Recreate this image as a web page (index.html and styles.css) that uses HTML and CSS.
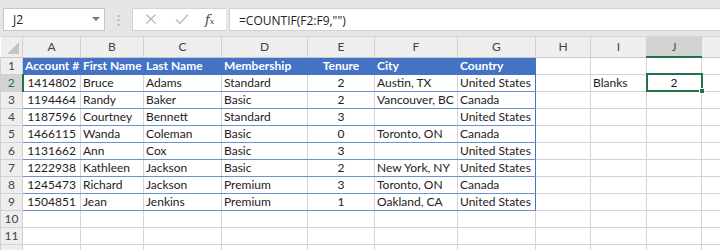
FILE: index.html
```html
<!DOCTYPE html>
<html lang="en">
<head>
    <meta charset="UTF-8">
    <meta name="viewport" content="width=device-width, initial-scale=1.0">
    <title>COUNTIF Blanks</title>
    <link rel="stylesheet" href="styles.css">
</head>
<body>
    <div class="formula-bar">
        <div class="name-box">
            <span>J2</span>
            <span class="arrow"></span>
        </div>
        <div class="grip">&#8942;</div>
        <div class="fx-box">
            <svg class="icon" width="12" height="12" viewBox="0 0 12 12"><path d="M1.5 1.5 L10.5 10.5 M10.5 1.5 L1.5 10.5" stroke="#b4b4b4" stroke-width="1.2" fill="none"/></svg>
            <svg class="icon" width="14" height="12" viewBox="0 0 14 12"><path d="M1 6.5 L5 10.5 L13 1.5" stroke="#b4b4b4" stroke-width="1.2" fill="none"/></svg>
            <span class="fx">f<sub>x</sub></span>
        </div>
        <div class="formula">=COUNTIF(F2:F9,"")</div>
    </div>

    <table class="sheet">
        <colgroup>
            <col style="width:22px">
            <col style="width:58px">
            <col style="width:63px">
            <col style="width:78px">
            <col style="width:86px">
            <col style="width:67px">
            <col style="width:83px">
            <col style="width:78px">
            <col style="width:55px">
            <col style="width:56px">
            <col style="width:55px">
            <col style="width:19px">
        </colgroup>
        <thead>
            <tr class="col-heads">
                <th class="corner"><span class="tri"></span></th>
                <th>A</th><th>B</th><th>C</th><th>D</th><th>E</th><th>F</th><th>G</th><th>H</th><th>I</th><th class="active">J</th><th></th>
            </tr>
        </thead>
        <tbody>
            <tr>
                <td class="rh">1</td>
                <td class="th first">Account #</td><td class="th">First Name</td><td class="th">Last Name</td><td class="th">Membership</td><td class="th c">Tenure</td><td class="th">City</td><td class="th last">Country</td>
                <td></td><td></td><td></td><td></td>
            </tr>
            <tr>
                <td class="rh active">2</td>
                <td class="tb first c">1414802</td><td class="tb">Bruce</td><td class="tb">Adams</td><td class="tb">Standard</td><td class="tb c">2</td><td class="tb">Austin, TX</td><td class="tb last">United States</td>
                <td></td><td>Blanks</td><td class="sel c">2<span class="handle"></span></td><td></td>
            </tr>
            <tr>
                <td class="rh">3</td>
                <td class="tb first c">1194464</td><td class="tb">Randy</td><td class="tb">Baker</td><td class="tb">Basic</td><td class="tb c">2</td><td class="tb">Vancouver, BC</td><td class="tb last">Canada</td>
                <td></td><td></td><td></td><td></td>
            </tr>
            <tr>
                <td class="rh">4</td>
                <td class="tb first c">1187596</td><td class="tb">Courtney</td><td class="tb">Bennett</td><td class="tb">Standard</td><td class="tb c">3</td><td class="tb"></td><td class="tb last">United States</td>
                <td></td><td></td><td></td><td></td>
            </tr>
            <tr>
                <td class="rh">5</td>
                <td class="tb first c">1466115</td><td class="tb">Wanda</td><td class="tb">Coleman</td><td class="tb">Basic</td><td class="tb c">0</td><td class="tb">Toronto, ON</td><td class="tb last">Canada</td>
                <td></td><td></td><td></td><td></td>
            </tr>
            <tr>
                <td class="rh">6</td>
                <td class="tb first c">1131662</td><td class="tb">Ann</td><td class="tb">Cox</td><td class="tb">Basic</td><td class="tb c">3</td><td class="tb"></td><td class="tb last">United States</td>
                <td></td><td></td><td></td><td></td>
            </tr>
            <tr>
                <td class="rh">7</td>
                <td class="tb first c">1222938</td><td class="tb">Kathleen</td><td class="tb">Jackson</td><td class="tb">Basic</td><td class="tb c">2</td><td class="tb">New York, NY</td><td class="tb last">United States</td>
                <td></td><td></td><td></td><td></td>
            </tr>
            <tr>
                <td class="rh">8</td>
                <td class="tb first c">1245473</td><td class="tb">Richard</td><td class="tb">Jackson</td><td class="tb">Premium</td><td class="tb c">3</td><td class="tb">Toronto, ON</td><td class="tb last">Canada</td>
                <td></td><td></td><td></td><td></td>
            </tr>
            <tr>
                <td class="rh">9</td>
                <td class="tb first c">1504851</td><td class="tb">Jean</td><td class="tb">Jenkins</td><td class="tb">Premium</td><td class="tb c">1</td><td class="tb">Oakland, CA</td><td class="tb last">United States</td>
                <td></td><td></td><td></td><td></td>
            </tr>
            <tr>
                <td class="rh">10</td>
                <td></td><td></td><td></td><td></td><td></td><td></td><td></td><td></td><td></td><td></td><td></td>
            </tr>
            <tr>
                <td class="rh">11</td>
                <td></td><td></td><td></td><td></td><td></td><td></td><td></td><td></td><td></td><td></td><td></td>
            </tr>
            <tr>
                <td class="rh"></td>
                <td></td><td></td><td></td><td></td><td></td><td></td><td></td><td></td><td></td><td></td><td></td>
            </tr>
        </tbody>
    </table>
</body>
</html>
```

FILE: styles.css
```css
* {
    box-sizing: border-box;
}
body {
    margin: 0;
    width: 720px;
    height: 250px;
    overflow: hidden;
    background-color: #ffffff;
    font-family: Lato, "Liberation Sans", sans-serif;
    color: #222;
}
.formula-bar {
    display: flex;
    align-items: center;
    height: 37px;
    padding: 8px 0 6px 3px;
    background-color: #e6e6e6;
    border-bottom: 1px solid #d6d6d6;
}
.name-box {
    display: flex;
    align-items: center;
    justify-content: space-between;
    width: 102px;
    height: 23px;
    padding: 0 4px 0 9px;
    background-color: #fff;
    border: 1px solid #c6c6c6;
    font-family: "Open Sans", sans-serif;
    font-size: 12px;
}
.arrow {
    width: 0;
    height: 0;
    border-left: 4px solid transparent;
    border-right: 4px solid transparent;
    border-top: 4px solid #777;
}
.grip {
    width: 27px;
    text-align: center;
    color: #a8a8a8;
    font-size: 13px;
}
.fx-box {
    display: flex;
    align-items: center;
    width: 94px;
    height: 23px;
    padding-left: 12px;
    gap: 18px;
    background-color: #fff;
    border: 1px solid #d2d2d2;
    border-right: none;
}
.icon {
    display: block;
}
.fx {
    font-family: "DejaVu Serif", serif;
    font-style: italic;
    font-size: 13px;
    color: #444;
    margin-left: -2px;
}
.fx sub {
    font-size: 8px;
    vertical-align: baseline;
}
.formula {
    flex: 1;
    height: 23px;
    margin-left: 3px;
    padding: 3px 0 0 9px;
    background-color: #fff;
    border: 1px solid #d2d2d2;
    border-right: none;
    font-family: "Open Sans", sans-serif;
    font-size: 12px;
}
.sheet {
    table-layout: fixed;
    border-collapse: collapse;
    width: 719px;
    font-size: 12px;
}
.sheet td {
    height: 17px;
    padding: 0 2px;
    border: 1px solid #d4d4d4;
    white-space: nowrap;
    overflow: hidden;
    line-height: 15px;
}
.col-heads th {
    height: 20px;
    padding: 0;
    font-weight: normal;
    font-size: 12px;
    color: #444;
    background-color: #eeeeee;
    border-left: 1px solid #d0d0d0;
    border-bottom: 1px solid #c8c8c8;
}
.col-heads th.corner {
    position: relative;
    border-left: none;
}
.tri {
    position: absolute;
    right: 3px;
    bottom: 3px;
    width: 0;
    height: 0;
    border-left: 12px solid transparent;
    border-bottom: 12px solid #c4c4c4;
}
.col-heads th.active {
    background-color: #d3d3d3;
    border-bottom: 2px solid #217346;
    color: #217346;
}
.sheet td.rh {
    padding: 0;
    text-align: center;
    color: #444;
    background-color: #eeeeee;
    border-color: #d0d0d0;
}
.sheet td.rh.active {
    background-color: #d3d3d3;
    color: #217346;
    border-right: 2px solid #217346;
}
.sheet td.th {
    background-color: #4472c4;
    color: #fff;
    font-weight: bold;
    border-color: #4472c4;
}
.sheet td.tb {
    border-top: 1px solid #6f8fcf;
    border-bottom: 1px solid #6f8fcf;
}
.sheet td.first {
    border-left: 1px solid #4472c4;
}
.sheet td.last {
    border-right: 1px solid #4472c4;
}
.sheet td.c {
    text-align: center;
}
.sheet td.sel {
    position: relative;
    overflow: visible;
    border: 2px solid #217346;
}
.handle {
    position: absolute;
    right: -4px;
    bottom: -4px;
    width: 6px;
    height: 6px;
    background-color: #217346;
    border: 1px solid #fff;
}
```
